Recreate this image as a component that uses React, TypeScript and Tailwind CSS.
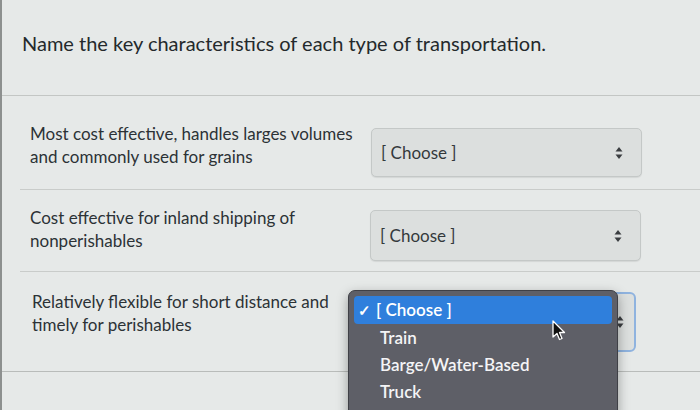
import React from "react";

const Arrows = () => (
  <svg width="8" height="14" viewBox="0 0 8 14" className="shrink-0">
    <path d="M4 1 L7.5 5.5 H0.5 Z" fill="#3a3d40" />
    <path d="M4 13 L7.5 8.5 H0.5 Z" fill="#3a3d40" />
  </svg>
);

const Select = ({ h }: { h: string }) => (
  <div
    className={`w-[271px] ${h} rounded-[5px] border border-[#c4c8c7] bg-[#dcdfde] flex items-center justify-between pl-[9px] pr-[18px] shadow-[0_1px_1px_rgba(0,0,0,0.08)]`}
  >
    <span className="text-[17px] text-[#34393c]">[ Choose ]</span>
    <Arrows />
  </div>
);

export default function App() {
  return (
    <div
      className="w-[700px] h-[410px] overflow-hidden bg-[#e6e9e8] border-l-2 border-[#8d908f] relative"
      style={{ fontFamily: "Lato, 'Open Sans', sans-serif" }}
    >
      <div className="h-[96px] pl-[20px] pt-[30px] border-b border-[#c3c6c4]">
        <h1 className="text-[20px] text-[#24292c] leading-[26px]">
          Name the key characteristics of each type of transportation.
        </h1>
      </div>

      <div className="ml-[18px] h-[94px] border-b border-[#c9ccca] flex items-start pt-[26px]">
        <div className="w-[351px] pl-[10px] text-[17px] leading-[23px] text-[#2c3236] whitespace-nowrap">
          Most cost effective, handles larges volumes
          <br />
          and commonly used for grains
        </div>
        <div className="pt-[6px]">
          <Select h="h-[49px]" />
        </div>
      </div>

      <div className="ml-[18px] h-[82px] border-b border-[#c9ccca] flex items-start pt-[16px]">
        <div className="w-[350px] pl-[10px] text-[17px] leading-[23px] text-[#2c3236]">
          Cost effective for inland shipping of
          <br />
          nonperishables
        </div>
        <div className="pt-[4px]">
          <Select h="h-[51px]" />
        </div>
      </div>

      <div className="h-[100px] border-b border-[#b9bcba] flex items-start pt-[18px]">
        <div className="w-[358px] pl-[30px] text-[17px] leading-[23px] text-[#2c3236] whitespace-nowrap">
          Relatively flexible for short distance and
          <br />
          timely for perishables
        </div>
        <div className="mt-[2px] w-[276px] h-[60px] rounded-[6px] border-2 border-[#8fb3df] bg-[#dcdfde] flex items-center justify-end pr-[10px]">
          <Arrows />
        </div>
      </div>

      <div className="absolute left-[346px] top-[290px] w-[270px] h-[130px] rounded-[7px] bg-[#5e5f67] border border-[#3f4046] shadow-[0_4px_12px_rgba(0,0,0,0.35)] px-[5px] pt-[5px] text-white text-[17px]">
        <div className="h-[28px] rounded-[4px] bg-[#2f7fdc] flex items-center pl-[4px] font-semibold">
          <span className="w-[18px] text-[15px]">✓</span>
          <span>[ Choose ]</span>
        </div>
        <div className="h-[27px] flex items-center pl-[26px] font-semibold text-[#f4f4f6]">Train</div>
        <div className="h-[27px] flex items-center pl-[26px] font-semibold text-[#f4f4f6]">Barge/Water-Based</div>
        <div className="h-[27px] flex items-center pl-[26px] font-semibold text-[#f4f4f6]">Truck</div>
      </div>

      <svg className="absolute left-[549px] top-[320px]" width="16" height="22" viewBox="0 0 16 22">
        <path d="M2 1 L2 17 L6 13.5 L8.5 19.5 L11 18.5 L8.5 12.5 L13.5 12.5 Z" fill="#111" stroke="#fff" strokeWidth="1.3" strokeLinejoin="round" />
      </svg>
    </div>
  );
}
